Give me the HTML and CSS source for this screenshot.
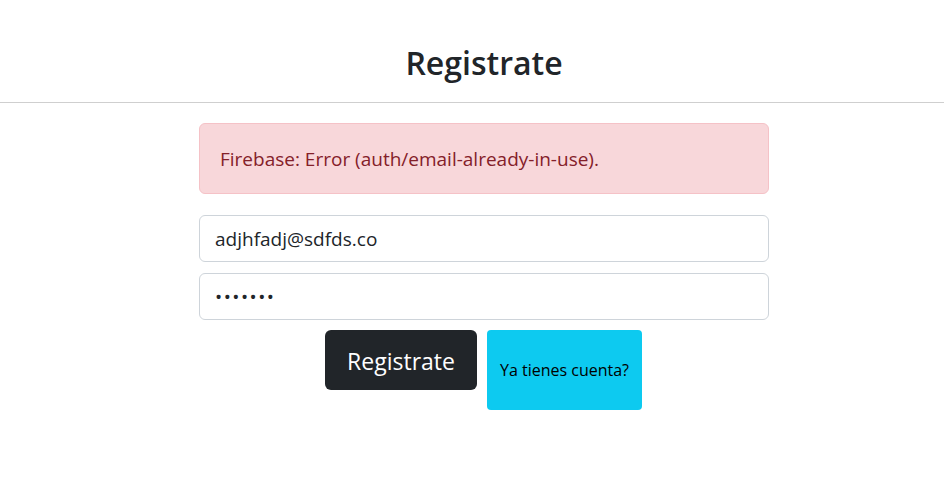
FILE: index.html
```html
<!DOCTYPE html>
<html lang="es">
<head>
<meta charset="utf-8">
<title>Registrate</title>
<link rel="stylesheet" href="styles.css">
</head>
<body>
<header class="header">
  <h1 class="title">Registrate</h1>
</header>
<main class="main">
  <div class="alert">Firebase: Error (auth/email-already-in-use).</div>
  <form class="form">
    <input class="input" type="email" value="adjhfadj@sdfds.co">
    <input class="input input-password" type="password" value="1234567">
    <div class="actions">
      <button type="button" class="btn btn-dark">Registrate</button>
      <button type="button" class="btn btn-info">Ya tienes cuenta?</button>
    </div>
  </form>
</main>
</body>
</html>
```

FILE: styles.css
```css
* { box-sizing: border-box; }
html, body { margin: 0; padding: 0; }
body {
  font-family: "Open Sans", "Noto Sans", "Liberation Sans", sans-serif;
  color: #212529;
  background: #fff;
}
.header {
  padding: 40px 0 0 24px;
  height: 103px;
  border-bottom: 1px solid #cfcfcf;
}
.title {
  margin: 0;
  text-align: center;
  font-size: 32px;
  font-weight: 600;
  line-height: 46px;
  color: #212529;
}
.main {
  padding-left: 24px;
  padding-top: 20px;
}
.alert, .form {
  width: 570px;
  margin: 0 auto;
}
.alert {
  height: 71px;
  display: flex;
  align-items: center;
  padding: 0 20px;
  background: #f8d7da;
  border: 1px solid #f5c2c7;
  border-radius: 6px;
  color: #842029;
  font-size: 19px;
}
.form {
  margin-top: 21px;
  display: flex;
  flex-direction: column;
  gap: 11px;
}
.input {
  display: block;
  width: 100%;
  height: 47px;
  padding: 0 15px;
  border: 1px solid #ced4da;
  border-radius: 6px;
  font-family: inherit;
  font-size: 19px;
  color: #212529;
  background: #fff;
}
.input-password {
  letter-spacing: 1.5px;
}
.actions {
  display: flex;
  align-items: flex-start;
  gap: 10px;
  margin-top: -1px;
  padding-left: 126px;
}
.btn {
  border: none;
  font-family: inherit;
  cursor: pointer;
  padding: 0;
}
.btn-dark {
  width: 152px;
  height: 60px;
  background: #212529;
  color: #fff;
  font-size: 23px;
  border-radius: 6px;
  padding-top: 2px;
}
.btn-info {
  width: 155px;
  height: 80px;
  background: #0dcaf0;
  color: #000;
  font-size: 16px;
  border-radius: 4px;
}
```
